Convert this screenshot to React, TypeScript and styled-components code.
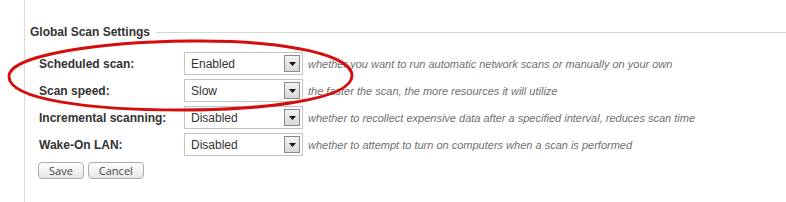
import React from "react"
import styled, { createGlobalStyle } from "styled-components"

const GlobalStyle = createGlobalStyle`
	html, body {
		margin: 0;
		padding: 0;
		background: #ffffff;
	}
	body {
		font-family: "Liberation Sans", Arial, sans-serif;
		color: #333333;
	}
`

type Setting = {
	label: string
	value: string
	hint: string
}

const settings: Setting[] = [
	{
		label: "Scheduled scan:",
		value: "Enabled",
		hint: "whether you want to run automatic network scans or manually on your own"
	},
	{
		label: "Scan speed:",
		value: "Slow",
		hint: "the faster the scan, the more resources it will utilize"
	},
	{
		label: "Incremental scanning:",
		value: "Disabled",
		hint: "whether to recollect expensive data after a specified interval, reduces scan time"
	},
	{
		label: "Wake-On LAN:",
		value: "Disabled",
		hint: "whether to attempt to turn on computers when a scan is performed"
	}
]

const SelectBox = ({ value }: { value: string }) => (
	<Select>
		<SelectValue>{value}</SelectValue>
		<ArrowButton>
			<svg width="7" height="4" viewBox="0 0 7 4">
				<path d="M0 0 H7 L3.5 4 Z" fill="#111" />
			</svg>
		</ArrowButton>
	</Select>
)

const App = () => {
	return (
		<Page>
			<GlobalStyle />
			<Section>
				<Header>
					<Title>Global Scan Settings</Title>
					<Rule />
				</Header>
				<Rows>
					{settings.map((s) => (
						<Row key={s.label}>
							<Label>{s.label}</Label>
							<SelectBox value={s.value} />
							<Hint>{s.hint}</Hint>
						</Row>
					))}
				</Rows>
				<Actions>
					<Button>Save</Button>
					<Button>Cancel</Button>
				</Actions>
			</Section>
			<Scribble width="786" height="202" viewBox="0 0 786 202">
				<path
					d="M 9 77 C 7 56, 95 42, 190 41 C 290 40, 353 56, 352 76 C 351 100, 262 110, 180 110 C 92 110, 10 100, 9 77 Z"
					fill="none"
					stroke="#d60d0d"
					strokeWidth="3"
				/>
			</Scribble>
		</Page>
	)
}

const Page = styled.div`
	position: relative;
	width: 786px;
	height: 202px;
	overflow: hidden;
`

const Section = styled.div`
	margin-left: 24px;
	height: 202px;
	border-left: 1px solid #dcdcdc;
	padding-top: 25px;
	box-sizing: border-box;
`

const Header = styled.div`
	display: flex;
	align-items: center;
	gap: 6px;
	padding-left: 5px;
	height: 14px;
`

const Title = styled.div`
	font-size: 12px;
	line-height: 14px;
	font-weight: bold;
	color: #333333;
	white-space: nowrap;
`

const Rule = styled.div`
	flex: 1;
	height: 1px;
	background: #d6d6d6;
	margin-top: 1px;
`

const Rows = styled.div`
	display: flex;
	flex-direction: column;
	gap: 4px;
	margin-top: 13px;
	padding-left: 14px;
`

const Row = styled.div`
	display: flex;
	align-items: center;
	height: 23px;
`

const Label = styled.div`
	width: 145px;
	font-size: 12px;
	font-weight: bold;
	color: #333333;
	white-space: nowrap;
`

const Select = styled.div`
	box-sizing: border-box;
	width: 119px;
	height: 23px;
	border: 1px solid #c4c4c4;
	background: #ffffff;
	display: flex;
	align-items: center;
	justify-content: space-between;
	padding: 0 2px 0 6px;
`

const SelectValue = styled.span`
	font-size: 12px;
	color: #333333;
`

const ArrowButton = styled.span`
	box-sizing: border-box;
	width: 16px;
	height: 17px;
	border: 1px solid #8a8a8a;
	background: linear-gradient(#f2f2f2, #d8d8d8);
	display: flex;
	align-items: center;
	justify-content: center;
`

const Hint = styled.div`
	margin-left: 5px;
	font-size: 11px;
	font-style: italic;
	color: #707070;
	white-space: nowrap;
`

const Actions = styled.div`
	display: flex;
	gap: 4px;
	margin-top: 6px;
	padding-left: 13px;
`

const Button = styled.button`
	box-sizing: border-box;
	height: 17px;
	padding: 0 10px;
	border: 1px solid #acacac;
	border-radius: 4px;
	background: linear-gradient(#ffffff, #e6e6e6);
	font-family: "Open Sans", "DejaVu Sans", sans-serif;
	font-size: 11px;
	line-height: 14px;
	color: #444444;
`

const Scribble = styled.svg`
	position: absolute;
	left: 0;
	top: 0;
	pointer-events: none;
`

export default App
